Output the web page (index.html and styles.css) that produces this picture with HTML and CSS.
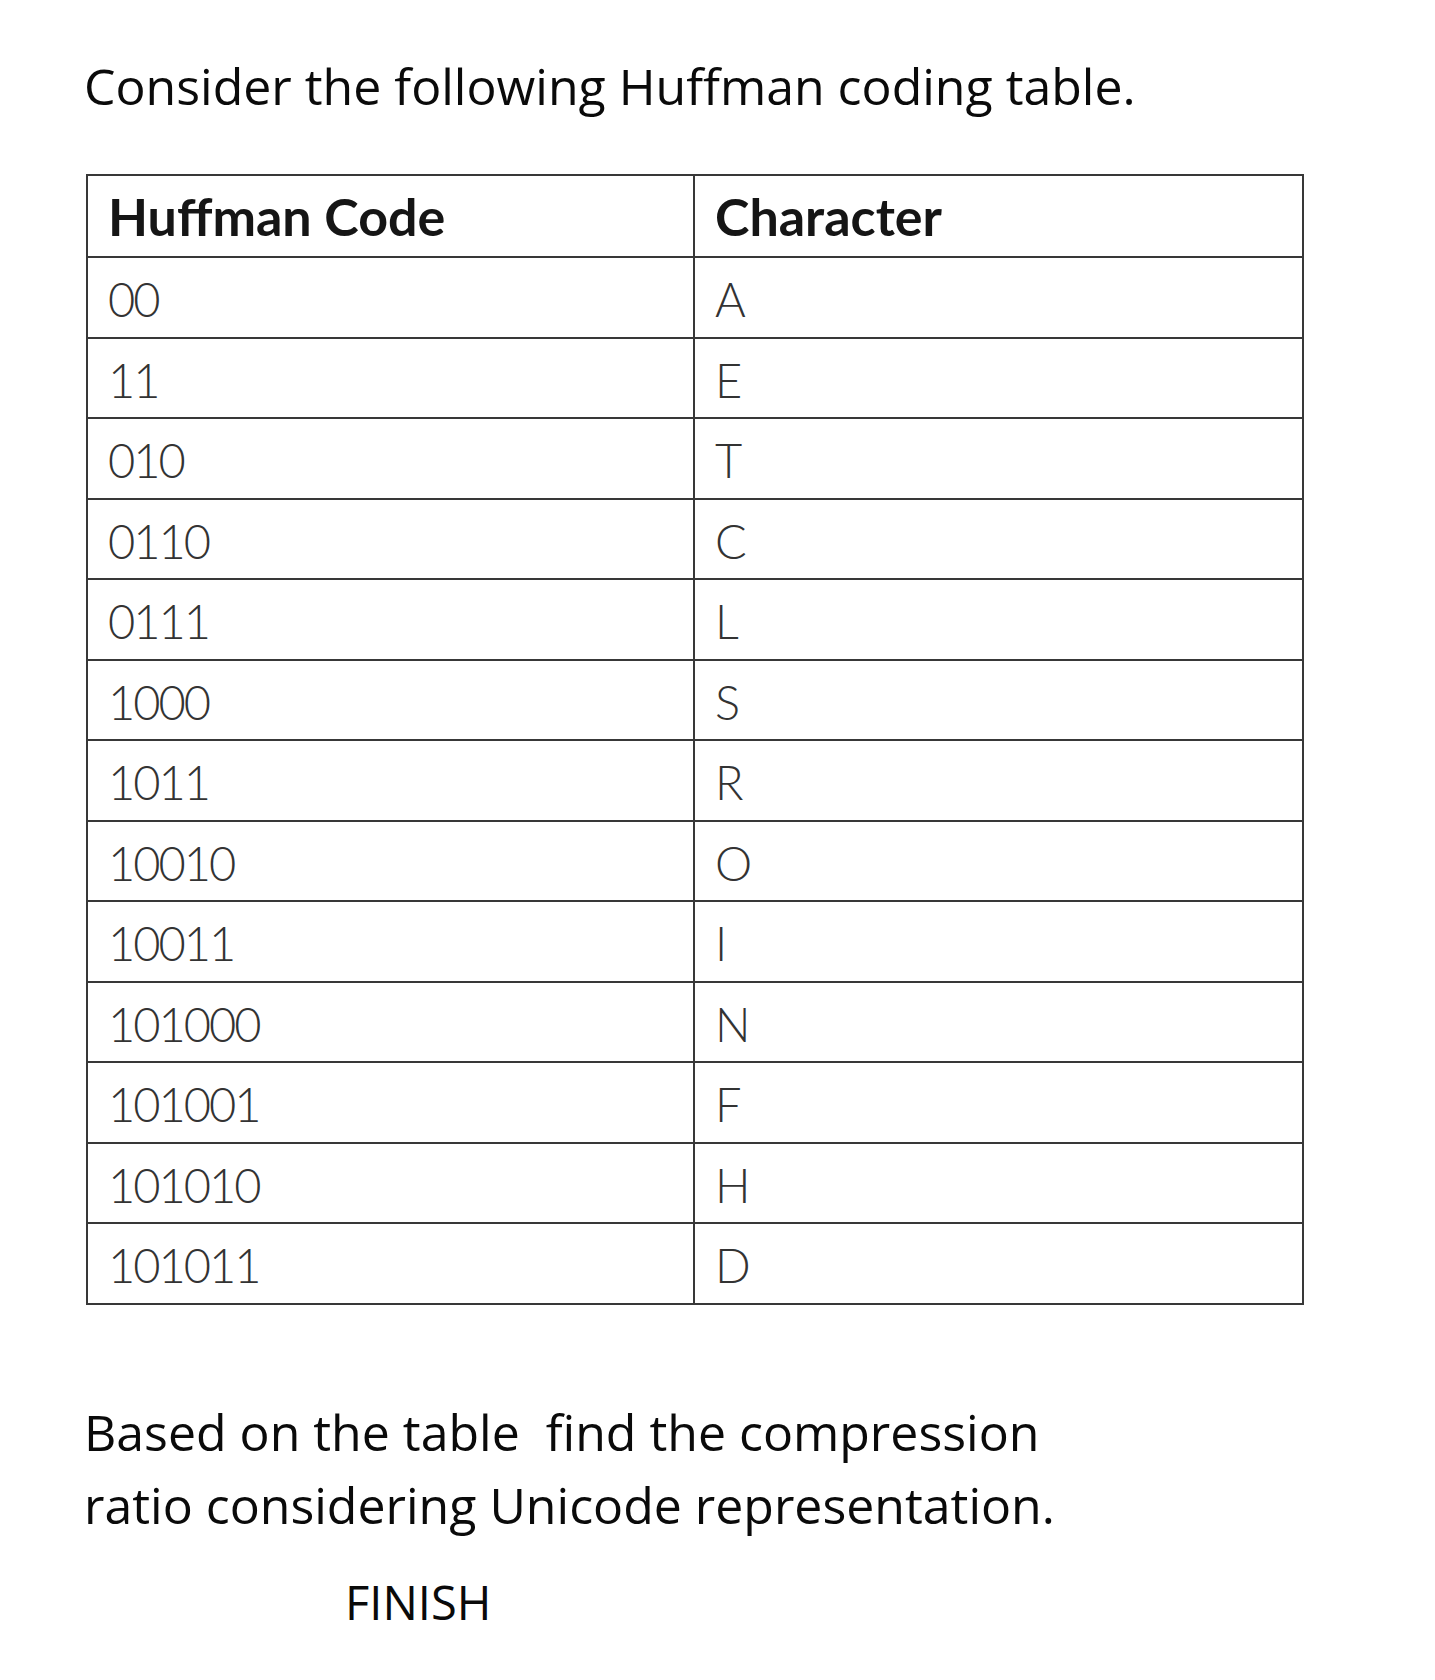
FILE: index.html
```html
<!DOCTYPE html>
<html>
<head>
<meta charset="utf-8">
<link rel="stylesheet" href="styles.css">
</head>
<body>
<div class="page">
  <p class="title">Consider the following Huffman coding table.</p>
  <table class="codes">
    <thead>
      <tr><th class="c1">Huffman Code</th><th>Character</th></tr>
    </thead>
    <tbody>
      <tr><td>00</td><td>A</td></tr>
      <tr><td>11</td><td>E</td></tr>
      <tr><td>010</td><td>T</td></tr>
      <tr><td>0110</td><td>C</td></tr>
      <tr><td>0111</td><td>L</td></tr>
      <tr><td>1000</td><td>S</td></tr>
      <tr><td>1011</td><td>R</td></tr>
      <tr><td>10010</td><td>O</td></tr>
      <tr><td>10011</td><td>I</td></tr>
      <tr><td>101000</td><td>N</td></tr>
      <tr><td>101001</td><td>F</td></tr>
      <tr><td>101010</td><td>H</td></tr>
      <tr><td>101011</td><td>D</td></tr>
    </tbody>
  </table>
  <p class="question">Based on the table&nbsp; find the compression<br>ratio considering Unicode representation.</p>
  <p class="finish">FINISH</p>
</div>
</body>
</html>
```
FILE: styles.css
```css
html, body {
  margin: 0;
  padding: 0;
  background: #ffffff;
}
.page {
  padding: 0 0 0 84px;
  font-family: "Open Sans", "Liberation Sans", sans-serif;
  color: #0a0a0a;
}
.title {
  margin: 0;
  padding-top: 61px;
  font-size: 50px;
  line-height: 50px;
  height: 174px;
  box-sizing: border-box;
}
.codes {
  border-collapse: collapse;
  margin-left: 2px;
  width: 1218px;
  font-family: "Lato", "Open Sans", sans-serif;
}
.codes th, .codes td {
  border: 2px solid #383838;
  height: 80.5px;
  padding: 0 0 0 20px;
  text-align: left;
  vertical-align: middle;
  box-sizing: border-box;
}
.codes th {
  height: 82px;
  font-weight: 700;
  font-size: 52px;
  color: #151515;
}
.codes td {
  font-weight: 300;
  font-size: 47px;
  letter-spacing: -2px;
  color: #333;
  padding-top: 4px;
}
.codes .c1 {
  width: 607px;
}
.question {
  margin: 0;
  padding-top: 91px;
  font-size: 50px;
  line-height: 73px;
}
.finish {
  margin: 0;
  padding: 30px 0 0 261px;
  font-size: 47px;
  line-height: 60px;
}
```
